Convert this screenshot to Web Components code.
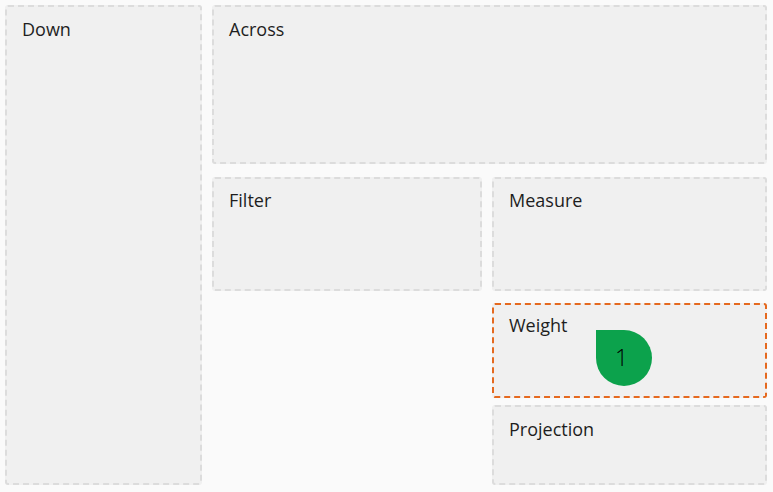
<!DOCTYPE html>
<html>
<head>
<meta charset="utf-8">
<title>Pivot drop zones</title>
<style>
  html, body { margin: 0; padding: 0; }
  body { background: #fafafa; font-family: "Open Sans", "Liberation Sans", sans-serif; color: #222; }
</style>
</head>
<body>
<pivot-layout>
  <drop-zone slot="down" label="Down" style="--h: 480px; --w: 197px; --pt: 11px"></drop-zone>
  <drop-zone slot="across" label="Across" style="--h: 159px; --pt: 11px"></drop-zone>
  <drop-zone slot="filter" label="Filter" style="--h: 114px; --w: 270px"></drop-zone>
  <drop-zone slot="stack" label="Measure" style="--h: 114px"></drop-zone>
  <drop-zone slot="stack" label="Weight" active style="--h: 95px; --mt: 12px; --pt: 9px">
    <drop-badge>1</drop-badge>
  </drop-zone>
  <drop-zone slot="stack" label="Projection" style="--h: 80px; --mt: 7px; --pt: 11px"></drop-zone>
</pivot-layout>

<script>
class PivotLayout extends HTMLElement {
  constructor() {
    super();
    this.attachShadow({ mode: "open" }).innerHTML = `
      <style>
        :host { display: flex; gap: 10px; padding: 5px 6px 7px 5px; width: 773px; height: 492px; box-sizing: border-box; }
        .right { flex: 1; display: flex; flex-direction: column; gap: 13px; min-width: 0; }
        .lower { display: flex; gap: 10px; align-items: flex-start; }
        .stack { flex: 1; display: flex; flex-direction: column; min-width: 0; }
      </style>
      <slot name="down"></slot>
      <div class="right">
        <slot name="across"></slot>
        <div class="lower">
          <slot name="filter"></slot>
          <div class="stack"><slot name="stack"></slot></div>
        </div>
      </div>
    `;
  }
}

class DropZone extends HTMLElement {
  constructor() {
    super();
    this.attachShadow({ mode: "open" }).innerHTML = `
      <style>
        :host {
          display: block;
          position: relative;
          box-sizing: border-box;
          flex: none;
          width: var(--w, auto);
          height: var(--h, auto);
          margin-top: var(--mt, 0);
          background: #f0f0f0;
          border: 2px dashed #dcdcdc;
          border-radius: 3px;
          padding: var(--pt, 10px) 15px 10px;
        }
        :host([active]) { border-color: #e5691f; }
        .label { font-size: 18px; font-weight: 500; line-height: 23px; color: #1e1e1e; }
      </style>
      <div class="label"></div>
      <slot></slot>
    `;
  }
  connectedCallback() {
    this.shadowRoot.querySelector(".label").textContent = this.getAttribute("label");
  }
}

class DropBadge extends HTMLElement {
  constructor() {
    super();
    this.attachShadow({ mode: "open" }).innerHTML = `
      <style>
        :host {
          position: absolute;
          left: 102px;
          top: 25px;
          width: 56px;
          height: 56px;
          box-sizing: border-box;
          padding: 0 5px 3px 0;
          display: flex;
          align-items: center;
          justify-content: center;
          background: #0ca24c;
          border-radius: 0 50% 50% 50%;
          color: #000;
          font-size: 23px;
          font-weight: 300;
        }
      </style>
      <slot></slot>
    `;
  }
}

customElements.define("pivot-layout", PivotLayout);
customElements.define("drop-zone", DropZone);
customElements.define("drop-badge", DropBadge);
</script>
</body>
</html>
